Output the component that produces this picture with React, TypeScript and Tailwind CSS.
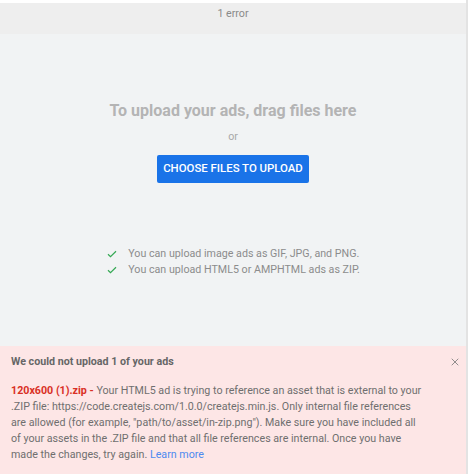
import React from "react";
import { X } from "lucide-react";

function Check() {
  return (
    <svg viewBox="0 0 24 24" className="w-[12px] h-[12px] shrink-0" fill="none" stroke="#34a853" strokeWidth="2.4">
      <path d="M4 12.5l5 5L20 6.5" />
    </svg>
  );
}

export default function App() {
  return (
    <div
      className="w-[474px] h-[474px] overflow-hidden bg-white flex"
      style={{ fontFamily: "Roboto, 'Liberation Sans', sans-serif" }}
    >
      <div className="w-[468px] flex flex-col pt-[3px] border-r-2 border-[#e3e3e3]">
        {/* Header */}
        <div className="h-[31px] bg-[#eeeeee] flex justify-center pt-[3px] text-[10.7px] leading-[16px] text-[#8a8a8a]">
          1 error
        </div>

        {/* Drop zone */}
        <div className="h-[312px] bg-[#f1f3f4] flex flex-col items-center pt-[66px]">
          <h2 className="text-[16px] leading-[22px] font-bold text-[#b4b4b4]">
            To upload your ads, drag files here
          </h2>
          <div className="mt-[7px] text-[10.7px] leading-[16px] text-[#a8a8a8]">or</div>
          <button
            type="button"
            className="mt-[10px] h-[28px] px-[6px] rounded-[2px] bg-[#1a73e8] text-white text-[11.4px] font-medium"
          >
            CHOOSE FILES TO UPLOAD
          </button>
          <ul className="mt-[63px] text-[10.7px] leading-[16px] text-[#8c8c8c]">
            <li className="flex items-center gap-[10px]">
              <Check />
              You can upload image ads as GIF, JPG, and PNG.
            </li>
            <li className="flex items-center gap-[10px]">
              <Check />
              You can upload HTML5 or AMPHTML ads as ZIP.
            </li>
          </ul>
        </div>

        {/* Error panel */}
        <div className="flex-1 bg-[#fde6e6] px-[11px] pt-[8px]">
          <div className="flex items-center justify-between mr-[-6px]">
            <h3 className="text-[10.7px] leading-[16px] font-bold text-[#666666]">
              We could not upload 1 of your ads
            </h3>
            <X className="w-[12px] h-[12px] text-[#757575]" strokeWidth={1.6} />
          </div>
          <p className="mt-[13px] text-[10.7px] leading-[16px] text-[#6f6f6f] whitespace-nowrap">
            <span className="font-bold text-[#d93025]">120x600 (1).zip - </span>
            Your HTML5 ad is trying to reference an asset that is external to your
            <br />
            .ZIP file: https://code.createjs.com/1.0.0/createjs.min.js. Only internal file references
            <br />
            are allowed (for example, "path/to/asset/in-zip.png"). Make sure you have included all
            <br />
            of your assets in the .ZIP file and that all file references are internal. Once you have
            <br />
            made the changes, try again. <span className="text-[#4d8af0]">Learn more</span>
          </p>
        </div>
      </div>
    </div>
  );
}
